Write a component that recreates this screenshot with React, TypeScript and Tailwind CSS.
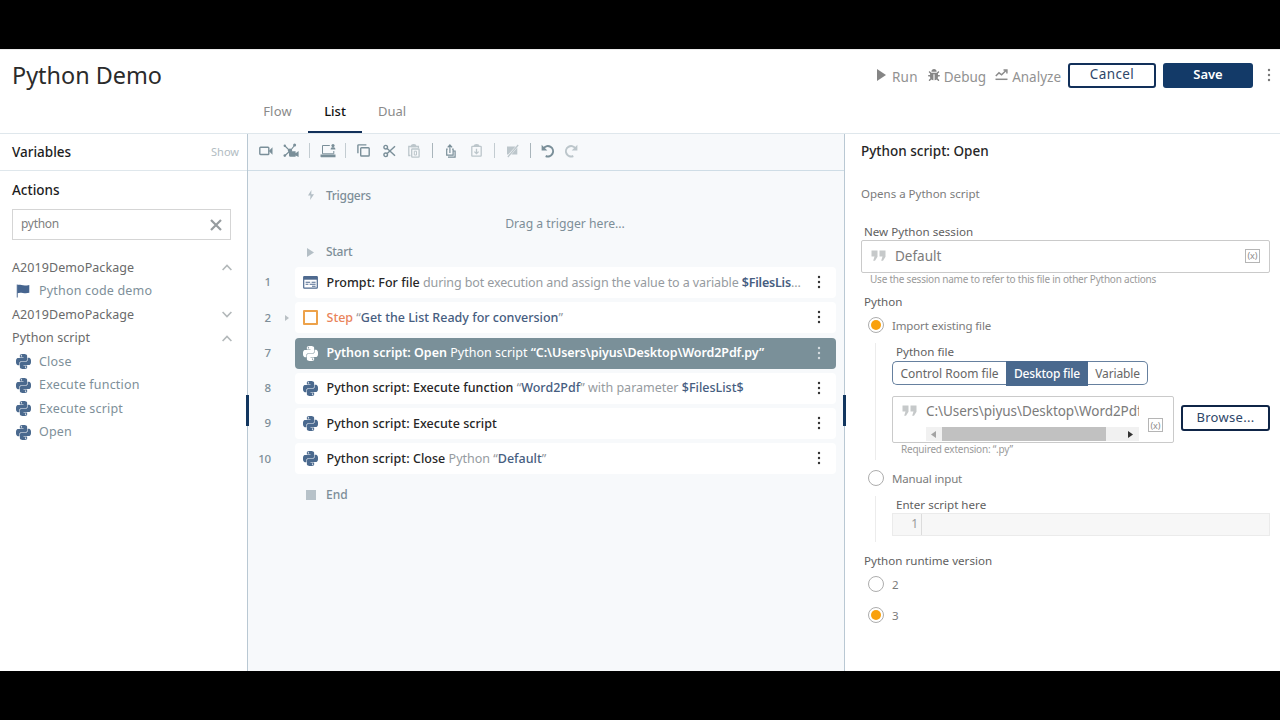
import type { ReactNode } from 'react'
import { clsx } from 'clsx'
import { FaBug } from 'react-icons/fa'
import { SiPython } from 'react-icons/si'

type IconProps = { className?: string }

const VideoIcon = () => (
  <svg width="14" height="10" viewBox="0 0 14 10" fill="none">
    <rect x="0.8" y="1.3" width="9" height="7.2" rx="0.8" stroke="#7a8f99" strokeWidth="1.4" />
    <path d="M9.8 5 13.5 1.3v7.4z" fill="#7a8f99" />
  </svg>
)

const BotRecordIcon = () => (
  <svg width="16" height="15" viewBox="0 0 16 15" fill="none">
    <path d="M2 3l5 5M11.5 2.5 7 8l-5 4.5" stroke="#7a8f99" strokeWidth="1.1" />
    <circle cx="1.8" cy="2.8" r="1.2" fill="#7a8f99" />
    <circle cx="11.6" cy="2" r="1.5" fill="#7a8f99" />
    <circle cx="1.8" cy="12.6" r="1.3" fill="#7a8f99" />
    <circle cx="7" cy="7.6" r="2.1" fill="#7a8f99" />
    <path d="M6 8.2h6.6v2L15.6 8v6l-3-1.6v1.4H7.4A1.4 1.4 0 0 1 6 12.4z" fill="#7a8f99" />
  </svg>
)

const LaptopIcon = () => (
  <svg width="16" height="14" viewBox="0 0 16 14" fill="none">
    <path d="M9.8 1.500H2.500v8.300h11.300V7" stroke="#7a8f99" strokeWidth="1" />
    <path d="M.5 10.600h15v2.600H1.100a.6.6 0 0 1-.6-.6z" fill="#7a8f99" />
    <circle cx="13" cy="1.600" r="1.600" fill="#7a8f99" />
    <path d="M10.600 5.600c0-1.700.9-2.300 2.400-2.300s2.400.6 2.400 2.300z" fill="#7a8f99" />
  </svg>
)

const CopyIcon = () => (
  <svg width="13" height="13" viewBox="0 0 13 13" fill="none" stroke="#7a8f99" strokeWidth="1.4">
    <rect x="3.7" y="3.7" width="8.5" height="8.3" rx="0.8" />
    <path d="M.9 9.200V1.600c0-.4.3-.7.7-.7h7.800" />
  </svg>
)

const CutIcon = () => (
  <svg width="13" height="14" viewBox="0 0 13 14" fill="none" stroke="#7a8f99" strokeWidth="1.4">
    <circle cx="2.7" cy="3.2" r="1.8" />
    <circle cx="2.7" cy="10.8" r="1.8" />
    <path d="M4.200 4.400 12 11.800M4.200 9.600 12 2.200" />
  </svg>
)

const PasteIcon = () => (
  <svg width="12" height="14" viewBox="0 0 12 14" fill="none" stroke="#bcc6cb" strokeWidth="1.3">
    <path d="M2.400 11.500H.8V2.500h9.600v1.800" />
    <path d="M3.400 2.500C3.400.9 4.300.7 5.600.7s2.200.2 2.200 1.800z" fill="#bcc6cb" />
    <rect x="3.7" y="5" width="7.4" height="8.2" rx="0.6" />
    <path d="M6.300 7.200h2.200v3.800H6.300z" strokeWidth="1" />
  </svg>
)

const ShareIcon = () => (
  <svg width="12" height="14" viewBox="0 0 12 14" fill="none" stroke="#7a8f99" strokeWidth="1.2">
    <path d="M3.700 5.200H2.700v6h6.400v-6H8.100M5.900 9V1.200M3.700 3.400 5.900 1l2.200 2.400" />
    <path d="M9.100 7h2v6.200H4" />
  </svg>
)

const ClipboardDownIcon = () => (
  <svg width="11" height="13" viewBox="0 0 11 13" fill="none" stroke="#bcc6cb" strokeWidth="1.3">
    <rect x="0.8" y="2.4" width="9.4" height="9.8" rx="0.6" />
    <path d="M3.200 2.400C3.200.9 4.200.7 5.500.7s2.300.2 2.300 1.700z" fill="#bcc6cb" />
    <path d="M5.500 4.800v4.800M3.400 7.600l2.100 2.100 2.100-2.100" />
  </svg>
)

const MuteIcon = () => (
  <svg width="13" height="14" viewBox="0 0 13 14" fill="none">
    <path d="M1 2.500h8.600L2.200 10.400H1z M11.300 3.600v6.800H5.400z" fill="#bcc6cb" />
    <path d="M12.200 1 1.800 13" stroke="#bcc6cb" strokeWidth="1.2" />
  </svg>
)

const UndoIcon = ({ className }: IconProps) => (
  <svg width="14" height="14" viewBox="0 0 14 14" fill="none" className={className}>
    <path d="M2.600 4.300A5.200 5.200 0 1 1 4.700 12" stroke="currentColor" strokeWidth="2" />
    <path d="M.6.8v5.600h5.700z" fill="currentColor" />
  </svg>
)

const PromptIcon = () => (
  <svg width="15" height="13" viewBox="0 0 15 13" fill="none">
    <rect x="0.7" y="0.7" width="13.6" height="11.4" rx="0.6" stroke="#4f6a8f" strokeWidth="1.2" />
    <path d="M.7.7h13.600v3H.7z" fill="#4f6a8f" />
    <path d="M2.600 6.200h4.600M8.600 6.200h4M2.600 8.200h2.800M6.600 8.200h6M9 10.200h3.600" stroke="#4f6a8f" strokeWidth="1.1" />
  </svg>
)

const FlagIcon = () => (
  <svg width="14" height="14" viewBox="0 0 14 14">
    <path d="M.7.6h1.200v13H.7z" fill="#6f86a6" />
    <path d="M1.300 1.300C4-.2 6 2.600 13.300 1v7.700C8 10.200 5 7.500 1.300 9.300z" fill="#46658f" />
  </svg>
)

const QuoteIcon = () => (
  <svg width="15" height="12" viewBox="0 0 15 12" fill="#c6c9ca">
    <path d="M.5.5h6v6.200L4 10.800H2.200L3.500 6.600h-3zM8.500.5h6v6.200L12 10.800h-1.800l1.300-4.200h-3z" />
  </svg>
)

const BoltIcon = () => (
  <svg width="6" height="10" viewBox="0 0 6 10" fill="#b4bfc6">
    <path d="M3.400 0 0 5.600h2.500L2.100 10 6 4.200H3.300z" />
  </svg>
)

const ChartIcon = () => (
  <svg width="13" height="12" viewBox="0 0 13 12" fill="none" stroke="#8c8c8c" strokeWidth="1.5">
    <path d="M.8 7 4 3.800l2.600 2L11 1.500M8.500 1h3.400v3.400" />
    <path d="M.5 10.300h12" />
  </svg>
)

const Chevron = ({ open }: { open: boolean }) => (
  <svg width="10" height="7" viewBox="0 0 10 7" fill="none" stroke="#b3b8ba" strokeWidth="1.6">
    <path d={open ? 'M.6 6 5 1.400 9.400 6' : 'M.6 1 5 5.600 9.400 1'} />
  </svg>
)

const Dots = ({ className }: IconProps) => (
  <svg width="4" height="14" viewBox="0 0 4 14" fill="currentColor" className={className}>
    <circle cx="2" cy="2" r="1.2" />
    <circle cx="2" cy="7" r="1.2" />
    <circle cx="2" cy="12" r="1.2" />
  </svg>
)

const VariableBadge = () => (
  <span className="flex h-[14px] w-[15px] shrink-0 items-center justify-center border border-[#b5b5b5] text-[9px] leading-none text-[#8a8a8a]">
    (x)
  </span>
)

const Divider = ({ className }: IconProps) => (
  <span className={clsx('h-[15px] w-px', className)} />
)

const Radio = ({ checked, label }: { checked?: boolean; label: string }) => (
  <div className="flex h-7 items-center pl-[7px] text-[11.5px] tracking-[-0.15px] text-[#7b7b7b]">
    <span className="mr-2 flex size-4 items-center justify-center rounded-full border border-[#adadad] bg-white">
      {checked && <span className="size-[10px] rounded-full bg-[#f9a10d]" />}
    </span>
    <span className="pt-px">{label}</span>
  </div>
)

const Label = ({ children, className }: { children: ReactNode; className: string }) => (
  <label className={clsx('flex items-center text-[11.6px] text-[#616161]', className)}>{children}</label>
)

const packages = [
  { name: 'A2019DemoPackage', open: true, actions: [{ name: 'Python code demo', icon: 'flag' }] },
  { name: 'A2019DemoPackage', open: false, actions: [] },
  {
    name: 'Python script',
    open: true,
    actions: [
      { name: 'Close', icon: 'python' },
      { name: 'Execute function', icon: 'python' },
      { name: 'Execute script', icon: 'python' },
      { name: 'Open', icon: 'python' },
    ],
  },
]

const Sidebar = () => (
  <aside className="w-[247px] shrink-0">
    <div className="flex h-[37px] items-center justify-between border-b border-[#dfe7ec] pr-2 pl-3">
      <h2 className="text-[13.5px] font-medium text-[#1c1c1c]">Variables</h2>
      <span className="text-[11px] text-[#b2bcc2]">Show</span>
    </div>
    <div className="pr-4 pl-3">
      <h2 className="flex h-[38px] items-center text-[13.5px] font-medium text-[#1c1c1c]">Actions</h2>
      <div className="flex h-[31px] items-center justify-between border border-[#d5d5d5] pr-2 pl-2 text-[12px] text-[#808080]">
        <span className="pb-0.5 tracking-[-0.3px]">python</span>
        <svg width="12" height="12" viewBox="0 0 12 12" stroke="#969c9f" strokeWidth="2.2">
          <path d="M1 1l10 10M11 1 1 11" />
        </svg>
      </div>
      <div className="-mr-px mt-4 text-[12.5px]">
        {packages.map((pkg, i) => (
          <div key={i}>
            <div className="flex h-[23.5px] items-center justify-between text-[#6a6a6a]">
              <span className="pt-px tracking-[0.07px]">{pkg.name}</span>
              <Chevron open={pkg.open} />
            </div>
            {pkg.actions.map((action) => (
              <div key={action.name} className="flex h-[23.5px] items-center pl-1 text-[#7e8f99]">
                <span className="mr-2 w-[15px]">
                  {action.icon === 'flag' ? <FlagIcon /> : <SiPython className="text-[15px] text-[#4a698e]" />}
                </span>
                <span className="pt-px tracking-[0.18px]">{action.name}</span>
              </div>
            ))}
          </div>
        ))}
      </div>
    </div>
  </aside>
)

const Toolbar = () => (
  <div className="flex h-[37px] items-center border-b border-[#cfdde6] pb-[3px] pl-[11px]">
    <VideoIcon />
    <span className="ml-[10px]"><BotRecordIcon /></span>
    <Divider className="ml-[10px] bg-[#c3ccd1]" />
    <span className="ml-[10px]"><LaptopIcon /></span>
    <Divider className="ml-[9px] bg-[#c3ccd1]" />
    <span className="ml-[11px]"><CopyIcon /></span>
    <span className="ml-[13px]"><CutIcon /></span>
    <span className="ml-[12px]"><PasteIcon /></span>
    <Divider className="ml-[12px] bg-[#a9b5bb]" />
    <span className="ml-[11px]"><ShareIcon /></span>
    <span className="ml-[15px]"><ClipboardDownIcon /></span>
    <Divider className="ml-[12px] bg-[#c3ccd1]" />
    <span className="ml-[11px]"><MuteIcon /></span>
    <Divider className="ml-[11px] bg-[#a9b5bb]" />
    <UndoIcon className="ml-[10px] text-[#7a8f99]" />
    <UndoIcon className="ml-[9px] -scale-x-100 text-[#bcc6cb]" />
  </div>
)

const Strong = ({ children }: { children: ReactNode }) => (
  <span className="font-medium tracking-[0.05px] text-[#262626]">{children}</span>
)
const Value = ({ children }: { children: ReactNode }) => (
  <span className="font-medium text-[#465d80]">{children}</span>
)

const pythonIcon = <SiPython className="text-[15px]" />

const lines = [
  {
    no: 1,
    icon: <PromptIcon />,
    text: (
      <>
        <Strong>Prompt: For file</Strong>
        <span className="tracking-[-0.110px]"> during bot execution and assign the value to a variable </span>
        <span className="font-semibold tracking-[-0.2px] text-[#465d80]">$FilesLis</span>...
      </>
    ),
  },
  {
    no: 2,
    icon: <span className="size-[15px] rounded-[1px] border-2 border-[#eda24a]" />,
    text: (
      <>
        <span className="font-medium text-[#e9835a]">Step</span> “<Value>Get the List Ready for conversion</Value>”
      </>
    ),
  },
  {
    no: 7,
    active: true,
    icon: pythonIcon,
    text: (
      <>
        <span className="font-semibold">Python script: Open</span> Python script{' '}
        <span className="font-semibold tracking-[-0.1px]">“C:\Users\piyus\Desktop\Word2Pdf.py”</span>
      </>
    ),
  },
  {
    no: 8,
    icon: pythonIcon,
    text: (
      <>
        <Strong>Python script: Execute function</Strong> “<Value>Word2Pdf</Value>” with parameter <Value>$FilesList$</Value>
      </>
    ),
  },
  { no: 9, icon: pythonIcon, text: <Strong>Python script: Execute script</Strong> },
  {
    no: 10,
    icon: pythonIcon,
    text: (
      <>
        <Strong>Python script: Close</Strong> Python “<Value>Default</Value>”
      </>
    ),
  },
]

const BotEditor = () => (
  <main className="relative w-[598px] shrink-0 border-x border-[#b9c8d3] bg-[#f7f9fb]">
    <Toolbar />
    <div className="pt-[11px] pr-2 text-[12px] text-[#7d8e98]">
      <div className="flex h-[28px] items-center pl-[60px] font-medium">
        <span className="mr-[12px] pb-0.5"><BoltIcon /></span>
        <span className="tracking-[-0.3px]">Triggers</span>
      </div>
      <div className="flex h-[28px] items-center justify-center pl-[46px] text-[12.2px]">Drag a trigger here...</div>
      <div className="flex h-[28px] items-center pl-[59px] font-medium">
        <svg width="7" height="9" viewBox="0 0 7 9" fill="#b4bfc6" className="mr-[12px]"><path d="M0 0l7 4.500L0 9z" /></svg>
        <span className="tracking-[-0.3px]">Start</span>
      </div>
      <div className="mt-px flex flex-col gap-[4.25px]">
        {lines.map((line) => (
          <div key={line.no} className="flex h-[31px] items-center">
            <span className="w-[23px] pb-px text-right text-[11.5px] font-medium tracking-[-0.2px]">{line.no}</span>
            <span className="flex w-[24px] pl-[14px]">
              {line.no === 2 && (
                <svg width="4" height="6" viewBox="0 0 4 6" fill="#b9c0c4"><path d="M0 0l4 3-4 3z" /></svg>
              )}
            </span>
            <div
              className={clsx(
                'flex h-full flex-1 items-center rounded-sm pr-[15px]',
                line.active ? 'bg-[#7a9099] text-white' : 'bg-white text-[#969ba0]',
              )}
            >
              <span className={clsx('ml-2 flex w-[23.5px]', !line.active && 'text-[#4a698e]')}>{line.icon}</span>
              <p className="flex-1 pt-px text-[12.5px] whitespace-nowrap">{line.text}</p>
              <Dots className={line.active ? 'mb-px text-[#d5dde0]' : 'mb-px text-[#333]'} />
            </div>
          </div>
        ))}
      </div>
      <div className="mt-[5px] flex h-[31px] items-center pl-[58px] font-medium">
        <span className="mr-[10px] size-[10px] bg-[#b7c2c9]" />
        End
      </div>
    </div>
    {/* panel resize handles */}
    <span className="absolute top-[261px] left-[-2px] h-[31px] w-[3px] bg-[#12365f]" />
    <span className="absolute top-[261px] right-[-2px] h-[31px] w-[3px] bg-[#12365f]" />
  </main>
)

const Properties = () => (
  <section className="flex-1 pr-[10px] pl-4 text-[12px] text-[#7b7b7b]">
    <h2 className="flex h-[35px] items-center text-[13.5px] font-medium text-[#262626]">Python script: Open</h2>
    <p className="flex h-[49px] items-center text-[11.5px]">Opens a Python script</p>

    <Label className="mt-1.5 h-4 pl-[3px]">New Python session</Label>
    <div className="flex h-[33px] items-center rounded-xs border border-[#cacaca] pr-[9px] pb-0.5 pl-[9px]">
      <QuoteIcon />
      <span className="ml-[9px] flex-1 pt-px text-[13.5px]">Default</span>
      <VariableBadge />
    </div>
    <p className="flex h-3 items-center pt-px pl-[9px] text-[10px] tracking-[-0.22px] text-[#9a9a9a]">
      Use the session name to refer to this file in other Python actions
    </p>

    <Label className="mt-2 h-[18px] pl-[3px]">Python</Label>
    <Radio checked label="Import existing file" />
    <div className="mt-1 ml-[14px] h-[117px] border-l border-[#ececec] pl-4">
      <Label className="h-[18px] pl-1">Python file</Label>
      <div className="flex h-[25px] w-[256px] text-[#666]">
        <span className="flex h-6 w-[114px] items-center justify-center rounded-l-[5px] border border-r-0 border-[#66809f] pt-px">Control Room file</span>
        <span className="flex w-[82px] items-center justify-center bg-[#4a698e] font-medium tracking-[-0.2px] text-white">Desktop file</span>
        <span className="flex h-6 flex-1 items-center justify-center rounded-r-[5px] border border-l-0 border-[#66809f] pt-px tracking-[-0.15px]">Variable</span>
      </div>
      <div className="mt-2.5 flex items-start">
        <div className="flex h-[47px] w-[282px] rounded-xs border border-[#cacaca]">
          <span className="mt-2 ml-[9px]"><QuoteIcon /></span>
          <div className="ml-[9px] w-[213px]">
            <div className="flex h-[30px] items-center overflow-hidden pb-px text-[13.5px] tracking-[-0.05px] whitespace-nowrap">
              C:\Users\piyus\Desktop\Word2Pdf
            </div>
            <div className="flex h-[14px] items-center justify-between bg-[#f1f1f1] pr-[6px] pl-[5px]">
              <svg width="5" height="7" viewBox="0 0 5 7" fill="#a3a3a3"><path d="M5 0v7L0 3.500z" /></svg>
              <span className="mr-auto ml-[6px] h-full w-[164px] bg-[#c1c1c1]" />
              <svg width="5" height="7" viewBox="0 0 5 7" fill="#333"><path d="M0 0v7l5-3.500z" /></svg>
            </div>
          </div>
          <span className="mt-[21px] ml-[9px]"><VariableBadge /></span>
        </div>
        <button className="mt-[9px] ml-[7px] h-[26px] w-[89px] rounded-[3px] border-2 border-[#0f2547] text-[13px] tracking-[0.3px] text-[#2d4668]">Browse...</button>
      </div>
      <p className="flex h-[13px] items-center pl-[9px] text-[10px] tracking-[-0.22px] text-[#9a9a9a]">Required extension: “.py”</p>
    </div>

    <div className="mt-1"><Radio label="Manual input" /></div>
    <div className="mt-1 ml-[14px] h-[46px] border-l border-[#ececec] pl-4">
      <Label className="h-[17px] pl-1">Enter script here</Label>
      <div className="flex h-[23px] border border-[#ebebeb] bg-[#f7f7f7]">
        <span className="h-[21px] w-[29px] border-r border-[#dcdcdc] pr-[3px] text-right text-[12px] leading-[20px] text-[#9a9a9a]">1</span>
      </div>
    </div>

    <Label className="mt-2.5 h-[18px] pl-[3px]">Python runtime version</Label>
    <Radio label="2" />
    <div className="mt-[3px]"><Radio checked label="3" /></div>
  </section>
)

const Header = () => (
  <header className="flex h-[85px] justify-between border-t border-b border-t-[#ececec] border-b-[#dfe7ec]">
    <div className="flex w-[500px] flex-col justify-between">
      <h1 className="pt-2 pl-3 text-[23.4px] leading-[34px] text-[#2b2b2b]">Python Demo</h1>
      <nav className="flex h-[41px] pl-[247px] text-[13px] text-[#8a8a8a]">
        <span className="flex w-[61px] items-center justify-center pb-0.5 tracking-[0.2px]">Flow</span>
        <span className="flex w-[54px] items-center justify-center border-b-2 border-[#12305a] font-medium text-[#111]">List</span>
        <span className="flex w-[60px] items-center justify-center pb-0.5">Dual</span>
      </nav>
    </div>
    <div className="mt-[12px] flex h-[26px] items-center pr-[9px] text-[13.5px] text-[#929292]">
      <svg width="9" height="12" viewBox="0 0 9 12" fill="#858585"><path d="M0 0l9 6-9 6z" /></svg>
      <span className="ml-[6px] pt-1 tracking-[0.2px]">Run</span>
      <FaBug className="ml-[10px] text-[12px] text-[#858585]" />
      <span className="ml-[4px] pt-1">Debug</span>
      <span className="ml-[9px]"><ChartIcon /></span>
      <span className="ml-[4px] pt-1">Analyze</span>
      <button className="ml-[7px] h-[25px] w-[88px] rounded-[3px] border-2 border-[#12305a] text-[13.5px] leading-none tracking-[0.4px] text-[#2d4668]">Cancel</button>
      <button className="ml-[7px] h-[25px] w-[90px] rounded-[3px] bg-[#133a68] text-[13px] font-semibold text-white">Save</button>
      <Dots className="ml-[14px] text-[#777]" />
    </div>
  </header>
)

export default function App() {
  return (
    <div className="h-[720px] w-[1280px] overflow-hidden bg-black py-[49px] font-['Noto_Sans','Open_Sans',sans-serif]">
      <div className="flex h-[622px] flex-col bg-white">
        <Header />
        <div className="flex min-h-0 flex-1">
          <Sidebar />
          <BotEditor />
          <Properties />
        </div>
      </div>
    </div>
  )
}
